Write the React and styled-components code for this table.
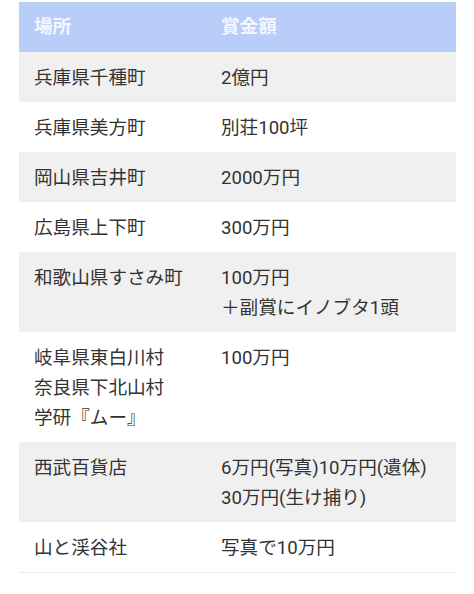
import React from "react";
import styled, { createGlobalStyle } from "styled-components";

const Global = createGlobalStyle`
  html, body { margin: 0; padding: 0; background: #ffffff; }
  body { font-family: Roboto, "Noto Sans CJK JP", sans-serif; }
`;

const Page = styled.div`
  padding: 2px 18px 0 19px;
`;

const Table = styled.table`
  width: 437px;
  border-collapse: collapse;
  font-size: 18.6px;
  color: #333333;
  border-bottom: 1px solid #ececec;
`;

const HeadCell = styled.th`
  background: #b8cdf8;
  color: #f4f7ff;
  font-weight: 700;
  text-align: left;
  height: 50px;
  padding: 0 15px;
  box-sizing: border-box;
  line-height: 30px;
  width: ${(p) => (p.$first ? "187px" : "auto")};
`;

const Row = styled.tr`
  background: ${(p) => (p.$alt ? "#f0f0f0" : "#ffffff")};
`;

const Cell = styled.td`
  padding: 11px 15px 9px;
  line-height: 30px;
  vertical-align: top;
  white-space: nowrap;
`;

const rows = [
  [["兵庫県千種町"], ["2億円"]],
  [["兵庫県美方町"], ["別荘100坪"]],
  [["岡山県吉井町"], ["2000万円"]],
  [["広島県上下町"], ["300万円"]],
  [["和歌山県すさみ町"], ["100万円", "＋副賞にイノブタ1頭"]],
  [["岐阜県東白川村", "奈良県下北山村", "学研『ムー』"], ["100万円"]],
  [["西武百貨店"], ["6万円(写真)10万円(遺体)", "30万円(生け捕り)"]],
  [["山と渓谷社"], ["写真で10万円"]],
];

const Lines = ({ lines }) =>
  lines.map((l, i) => (
    <React.Fragment key={i}>
      {i > 0 && <br />}
      {l}
    </React.Fragment>
  ));

export default function App() {
  return (
    <>
      <Global />
      <Page>
        <Table>
          <thead>
            <tr>
              <HeadCell $first>場所</HeadCell>
              <HeadCell>賞金額</HeadCell>
            </tr>
          </thead>
          <tbody>
            {rows.map((r, i) => (
              <Row key={i} $alt={i % 2 === 0}>
                <Cell>
                  <Lines lines={r[0]} />
                </Cell>
                <Cell>
                  <Lines lines={r[1]} />
                </Cell>
              </Row>
            ))}
          </tbody>
        </Table>
      </Page>
    </>
  );
}
